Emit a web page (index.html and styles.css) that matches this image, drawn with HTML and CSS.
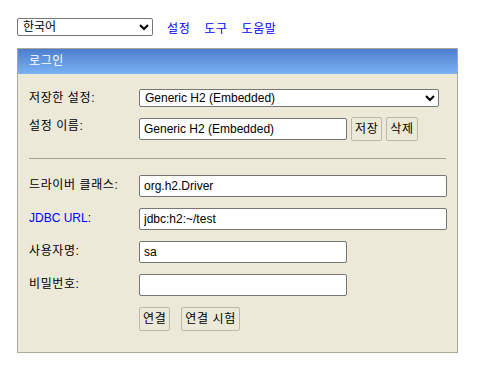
FILE: index.html
```html
<!DOCTYPE html>
<html lang="ko">
  <head>
    <meta charset="UTF-8" />
    <meta name="viewport" content="width=device-width, initial-scale=1.0" />
    <title>H2 Console</title>
    <link rel="stylesheet" href="styles.css">
  </head>
  <body>
    <!-- language + top links -->
    <div class="topbar">
      <select class="lang">
        <option>한국어</option>
      </select>
      <a href="#">설정</a>
      <a href="#">도구</a>
      <a href="#">도움말</a>
    </div>

    <form class="login" onsubmit="return false">
      <div class="login-title">로그인</div>
      <div class="login-body">
        <div class="row">
          <label>저장한 설정:</label>
          <select class="setting">
            <option>Generic H2 (Embedded)</option>
          </select>
        </div>
        <div class="row">
          <label>설정 이름:</label>
          <div class="inline">
            <input type="text" class="short" value="Generic H2 (Embedded)" />
            <button type="button">저장</button>
            <button type="button">삭제</button>
          </div>
        </div>

        <hr />

        <div class="fields">
          <div class="row field">
            <label>드라이버 클래스:</label>
            <input type="text" class="wide" value="org.h2.Driver" />
          </div>
          <div class="row field">
            <label class="latin"><a href="#">JDBC URL</a>:</label>
            <input type="text" class="wide" value="jdbc:h2:~/test" />
          </div>
          <div class="row field">
            <label>사용자명:</label>
            <input type="text" class="short" value="sa" />
          </div>
          <div class="row field">
            <label>비밀번호:</label>
            <input type="password" class="short" value="" />
          </div>
          <div class="row">
            <span></span>
            <div class="actions">
              <button type="button">연결</button>
              <button type="button">연결 시험</button>
            </div>
          </div>
        </div>
      </div>
    </form>
  </body>
</html>
```

FILE: styles.css
```css
body {
  margin: 0;
  padding: 18px 17px 0;
  font-family: "Liberation Sans", "Noto Sans CJK KR", sans-serif;
  font-size: 12px;
  color: #000;
  background: #fff;
}

a {
  color: #0000ff;
  text-decoration: none;
}

/* top bar */
.topbar {
  display: flex;
  align-items: center;
  gap: 14px;
  height: 18px;
}

.topbar a {
  letter-spacing: 0.6px;
}

.lang {
  width: 136px;
}

select,
input,
button {
  font-family: "Liberation Sans", "Noto Sans CJK KR", sans-serif;
  font-size: 12px;
  color: #000;
  box-sizing: border-box;
  margin: 0;
}

select {
  height: 18px;
  padding: 0 0 0 1px;
  border: 1px solid #767676;
  border-radius: 2px;
  background-color: #fff;
}

input {
  height: 22px;
  padding: 0 4px;
  border: 1px solid #767676;
  border-radius: 2px;
  background: #fff;
}

input.wide {
  width: 308px;
}

input.short {
  width: 208px;
}

button {
  height: 24px;
  padding: 0 3px;
  line-height: 16px;
  letter-spacing: 0.6px;
  background: #ece9d8;
  border: 1px solid #bcb9ab;
  border-radius: 2px;
}

/* login panel */
.login {
  width: 441px;
  box-sizing: border-box;
  margin-top: 12px;
  background-color: #ece9d8;
  border: 1px solid #aca899;
}

.login-title {
  height: 25px;
  line-height: 25px;
  padding-left: 11px;
  letter-spacing: 0.6px;
  color: #fff;
  background: linear-gradient(to bottom, #4c7ecf, #7bb2f2);
}

.login-body {
  padding: 15px 11px 21px 11px;
}

.row {
  display: grid;
  grid-template-columns: 110px auto;
  align-items: start;
}

.row + .row {
  margin-top: 10px;
}

.row label {
  line-height: 16px;
  padding-top: 1px;
  letter-spacing: 0.6px;
}

.row label.latin {
  letter-spacing: normal;
}

.setting {
  width: 300px;
}

.inline {
  display: flex;
  align-items: center;
  gap: 4px;
  height: 24px;
}

hr {
  margin: 17px 0 16px;
  border: 0;
  border-top: 1px solid #a5a294;
  height: 0;
}

.fields .row + .row {
  margin-top: 11px;
}

.field label {
  padding-top: 2px;
}

.actions {
  display: flex;
  gap: 11px;
}
```
